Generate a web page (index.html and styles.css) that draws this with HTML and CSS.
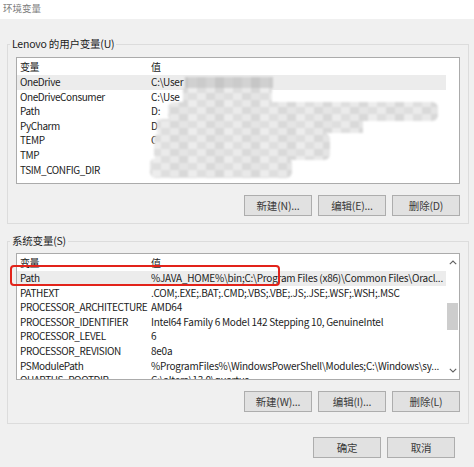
FILE: index.html
```html
<!DOCTYPE html>
<html lang="zh-CN">
<head>
<meta charset="utf-8">
<title>环境变量</title>
<link rel="stylesheet" href="styles.css">
</head>
<body>
<div class="titlebar">环境变量</div>
<div class="dialog">
  <fieldset class="group group-user">
    <legend>Lenovo 的用户变量(U)</legend>
    <div class="group-body">
      <div class="list list-user">
        <div class="rows">
          <div class="row head"><span class="c1">变量</span><span class="c2">值</span></div>
          <div class="row sel"><span class="c1">OneDrive</span><span class="c2">C:\User</span></div>
          <div class="row"><span class="c1">OneDriveConsumer</span><span class="c2">C:\Use</span></div>
          <div class="row"><span class="c1">Path</span><span class="c2">D:</span></div>
          <div class="row"><span class="c1">PyCharm</span><span class="c2">D</span></div>
          <div class="row"><span class="c1">TEMP</span><span class="c2">C</span></div>
          <div class="row"><span class="c1">TMP</span><span class="c2"></span></div>
          <div class="row"><span class="c1">TSIM_CONFIG_DIR</span><span class="c2"></span></div>
        </div>
        <svg class="mosaic" width="440" height="125" viewBox="0 0 440 125">
          <defs>
            <pattern id="mz" width="36" height="14" patternUnits="userSpaceOnUse">
              <rect x="0" y="0" width="9" height="7" fill="#dedede"/>
              <rect x="9" y="0" width="9" height="7" fill="#e9e9e9"/>
              <rect x="18" y="0" width="9" height="7" fill="#d8d8d8"/>
              <rect x="27" y="0" width="9" height="7" fill="#ededed"/>
              <rect x="0" y="7" width="9" height="7" fill="#ebebeb"/>
              <rect x="9" y="7" width="9" height="7" fill="#d9d9d9"/>
              <rect x="18" y="7" width="9" height="7" fill="#e5e5e5"/>
              <rect x="27" y="7" width="9" height="7" fill="#dedede"/>
            </pattern>
            <pattern id="mz2" width="36" height="11" patternUnits="userSpaceOnUse">
              <rect x="0" y="0" width="9" height="11" fill="#cbcbcb"/>
              <rect x="9" y="0" width="9" height="11" fill="#d3d3d3"/>
              <rect x="18" y="0" width="9" height="11" fill="#c6c6c6"/>
              <rect x="27" y="0" width="9" height="11" fill="#d0d0d0"/>
            </pattern>
          </defs>
          <rect x="168" y="19" width="88" height="11" fill="url(#mz2)"/>
          <rect x="166" y="30" width="89" height="14" fill="url(#mz)"/>
          <rect x="151" y="44" width="270" height="19" rx="6" fill="url(#mz)"/>
          <rect x="140" y="61" width="206" height="14" fill="url(#mz)"/>
          <rect x="137" y="75" width="176" height="27" rx="6" fill="url(#mz)"/>
          <rect x="133" y="100" width="142" height="20" rx="6" fill="url(#mz)"/>
        </svg>
      </div>
      <div class="btns">
        <button class="btn">新建(N)...</button>
        <button class="btn">编辑(E)...</button>
        <button class="btn">删除(D)</button>
      </div>
    </div>
  </fieldset>

  <fieldset class="group group-sys">
    <legend>系统变量(S)</legend>
    <div class="group-body">
      <div class="list-wrap">
        <div class="list list-sys">
          <div class="rows">
            <div class="row head"><span class="c1">变量</span><span class="c2">值</span></div>
            <div class="row sel"><span class="c1">Path</span><span class="c2">%JAVA_HOME%\bin;C:\Program Files (x86)\Common Files\Oracl...</span></div>
            <div class="row"><span class="c1">PATHEXT</span><span class="c2">.COM;.EXE;.BAT;.CMD;.VBS;.VBE;.JS;.JSE;.WSF;.WSH;.MSC</span></div>
            <div class="row"><span class="c1">PROCESSOR_ARCHITECTURE</span><span class="c2">AMD64</span></div>
            <div class="row"><span class="c1">PROCESSOR_IDENTIFIER</span><span class="c2">Intel64 Family 6 Model 142 Stepping 10, GenuineIntel</span></div>
            <div class="row"><span class="c1">PROCESSOR_LEVEL</span><span class="c2">6</span></div>
            <div class="row"><span class="c1">PROCESSOR_REVISION</span><span class="c2">8e0a</span></div>
            <div class="row"><span class="c1">PSModulePath</span><span class="c2">%ProgramFiles%\WindowsPowerShell\Modules;C:\Windows\sy...</span></div>
            <div class="row"><span class="c1">QUARTUS_ROOTDIR</span><span class="c2">C:\altera\13.0\quartus</span></div>
          </div>
          <div class="scrollbar">
            <div class="arrow"><svg width="8" height="5" viewBox="0 0 8 5"><path d="M0.8 4.2 L4 1 L7.2 4.2" fill="none" stroke="#606060" stroke-width="1.1"/></svg></div>
            <div class="track"><div class="thumb"></div></div>
            <div class="arrow"><svg width="8" height="5" viewBox="0 0 8 5"><path d="M0.8 0.8 L4 4 L7.2 0.8" fill="none" stroke="#606060" stroke-width="1.1"/></svg></div>
          </div>
        </div>
        <div class="redbox"></div>
      </div>
      <div class="btns">
        <button class="btn">新建(W)...</button>
        <button class="btn">编辑(I)...</button>
        <button class="btn">删除(L)</button>
      </div>
    </div>
  </fieldset>

  <div class="footer">
    <button class="btn">确定</button>
    <button class="btn">取消</button>
  </div>
</div>
</body>
</html>
```

FILE: styles.css
```css
html, body {
  margin: 0;
  padding: 0;
}
body {
  width: 474px;
  height: 467px;
  overflow: hidden;
  background: #ffffff;
  font-family: "Noto Sans CJK SC", "Noto Sans", sans-serif;
  font-size: 10px;
  letter-spacing: -0.2px;
  color: #1c1c1c;
}
.titlebar {
  height: 19px;
  line-height: 17px;
  padding-left: 3px;
  color: #7c7c7c;
  font-size: 9.5px;
  letter-spacing: 0;
}
.dialog {
  height: 448px;
  box-sizing: border-box;
  background: #f0f0f0;
  padding: 18px 5px 0 7px;
}
.group {
  margin: 0;
  padding: 0;
  border: 1px solid #dcdcdc;
  min-width: 0;
}
.group legend {
  margin-left: 2px;
  padding: 0 2px;
  height: 14px;
  line-height: 14px;
  font-size: 10.5px;
  letter-spacing: -0.2px;
  color: #1c1c1c;
}
.group-body {
  padding: 6px 8px 7px 8px;
}
.group-sys {
  margin-top: 10px;
}
.group-sys .group-body {
  padding-top: 5px;
  padding-bottom: 11px;
}
.list-wrap {
  position: relative;
}
.list {
  position: relative;
  height: 127px;
  box-sizing: border-box;
  border: 1px solid #ababab;
  background: #ffffff;
  overflow: hidden;
  display: flex;
}
.rows {
  flex: 1;
  min-width: 0;
  margin-right: 13px;
}
.row {
  display: flex;
  height: 14.6px;
  line-height: 14.6px;
  white-space: nowrap;
  font-size: 10px;
  letter-spacing: -0.25px;
}
.row.head {
  height: 17px;
  line-height: 17px;
}
.row.sel {
  background: #ececec;
}
.c1 {
  width: 131px;
  padding-left: 3px;
  flex: none;
  overflow: hidden;
  letter-spacing: -0.4px;
}
.c2 {
  flex: 1;
  overflow: hidden;
}
.mosaic {
  position: absolute;
  left: 0;
  top: 0;
  filter: blur(1px);
}
.list-sys .rows {
  margin-right: 0;
}
.scrollbar {
  width: 13px;
  flex: none;
  display: flex;
  flex-direction: column;
  background: #ffffff;
}
.arrow {
  height: 17px;
  display: flex;
  align-items: center;
  justify-content: center;
}
.track {
  flex: 1;
}
.thumb {
  margin: 32px 1px 0 1px;
  height: 27px;
  background: #cdcdcd;
}
.redbox {
  position: absolute;
  left: -6px;
  top: 12px;
  width: 270px;
  height: 21px;
  box-sizing: border-box;
  border: 2px solid #e2231a;
  border-radius: 4px;
}
.btns {
  display: flex;
  justify-content: flex-end;
  gap: 6px;
  margin-top: 11px;
}
.btn {
  width: 68px;
  height: 21px;
  box-sizing: border-box;
  margin: 0;
  padding: 0;
  border: 1px solid #adadad;
  background: #e1e1e1;
  font-family: "Noto Sans CJK SC", "Noto Sans", sans-serif;
  font-size: 10.5px;
  letter-spacing: -0.2px;
  color: #3a3a3a;
}
.footer {
  display: flex;
  justify-content: flex-end;
  gap: 6px;
  margin-top: 13px;
  padding-right: 14px;
}
```
